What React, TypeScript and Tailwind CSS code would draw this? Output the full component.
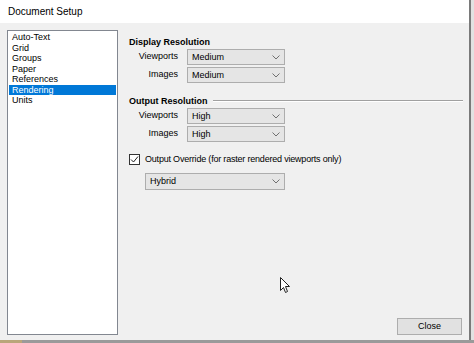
import React from "react";

function Chevron() {
  return (
    <svg width="8" height="5" viewBox="0 0 8 5" className="shrink-0">
      <path d="M0.5 0.5 L4 4 L7.5 0.5" fill="none" stroke="#707070" strokeWidth="1" />
    </svg>
  );
}

function Select({ value, className }: { value: string; className: string }) {
  return (
    <div
      className={
        "h-[16px] flex items-center justify-between pl-[4px] pr-[4px] bg-[#e5e5e5] border border-[#adadad] " +
        className
      }
    >
      <span className="leading-none">{value}</span>
      <Chevron />
    </div>
  );
}

function Row({ label, value }: { label: string; value: string }) {
  return (
    <div className="flex items-center h-[16px]">
      <div className="w-[49px] text-right leading-none pb-[2px]">{label}</div>
      <Select value={value} className="ml-[9px] w-[98px]" />
    </div>
  );
}

export default function App() {
  const items = ["Auto-Text", "Grid", "Groups", "Paper", "References", "Rendering", "Units"];
  return (
    <div
      className="relative w-[474px] h-[343px] flex flex-col overflow-hidden bg-[#9c9c9c] text-black text-[9px]"
      style={{ fontFamily: '"Liberation Sans", Arial, sans-serif' }}
    >
      <div className="flex h-[340px]">
        <div className="w-[469px] flex flex-col bg-[#f0f0f0]">
          <div className="h-[23px] bg-white flex items-center pl-[8px] text-[10px] shrink-0">
            Document Setup
          </div>
          <div className="flex-1 flex pl-[7px] pt-[7px] pb-[5px]">
            <div className="w-[111px] bg-white border border-[#828790] pt-[1px] px-[1px]">
              {items.map((it) => (
                <div
                  key={it}
                  className={
                    "h-[10.5px] leading-[10.5px] pl-[3px] " +
                    (it === "Rendering" ? "bg-[#0078d7] text-white" : "")
                  }
                >
                  {it}
                </div>
              ))}
            </div>
            <div className="flex-1 flex flex-col pl-[11px]">
              <div className="mt-[6px] h-[12px] leading-[12px] font-bold">Display Resolution</div>
              <div className="mt-[1px] flex flex-col gap-[2px]">
                <Row label="Viewports" value="Medium" />
                <Row label="Images" value="Medium" />
              </div>
              <div className="mt-[12px] h-[12px] flex items-center mr-[6px]">
                <span className="font-bold leading-[12px]">Output Resolution</span>
                <div className="flex-1 ml-[5px] h-[2px] border-t border-[#a0a0a0] border-b border-b-white" />
              </div>
              <div className="mt-[1px] flex flex-col gap-[2px]">
                <Row label="Viewports" value="High" />
                <Row label="Images" value="High" />
              </div>
              <div className="mt-[11px] h-[13px] flex items-center">
                <div className="w-[11px] h-[11px] border border-[#333] bg-white flex items-center justify-center">
                  <svg width="9" height="9" viewBox="0 0 9 9">
                    <path d="M1 4.5 L3.5 7 L8 1.5" fill="none" stroke="#222" strokeWidth="1" />
                  </svg>
                </div>
                <span className="ml-[5px] leading-none tracking-[-0.2px]">
                  Output Override (for raster rendered viewports only)
                </span>
              </div>
              <Select value="Hybrid" className="mt-[7px] ml-[16px] w-[140px] h-[17px]" />
              <div className="mt-auto self-end mr-[7px] w-[65px] h-[17px] bg-[#e1e1e1] border border-[#adadad] flex items-center justify-center leading-none">
                Close
              </div>
            </div>
          </div>
        </div>
        <div className="w-[2px] bg-[#7a7a7a]" />
        <div className="flex-1 bg-[#e2e2e2]" />
      </div>
      <div className="flex h-[3px]">
        <div className="w-[22px] bg-[#b9a67a]" />
        <div className="flex-1 bg-[#9a9a9a]" />
      </div>
      <svg
        className="absolute left-[280px] top-[277px]"
        width="11"
        height="17"
        viewBox="0 0 11 17"
      >
        <path
          d="M0.5 0.5 L0.5 13.5 L3.5 10.5 L5.5 15.5 L7.5 14.5 L5.5 9.5 L9.5 9.5 Z"
          fill="white"
          stroke="#222"
          strokeWidth="1"
          strokeLinejoin="round"
        />
      </svg>
    </div>
  );
}
